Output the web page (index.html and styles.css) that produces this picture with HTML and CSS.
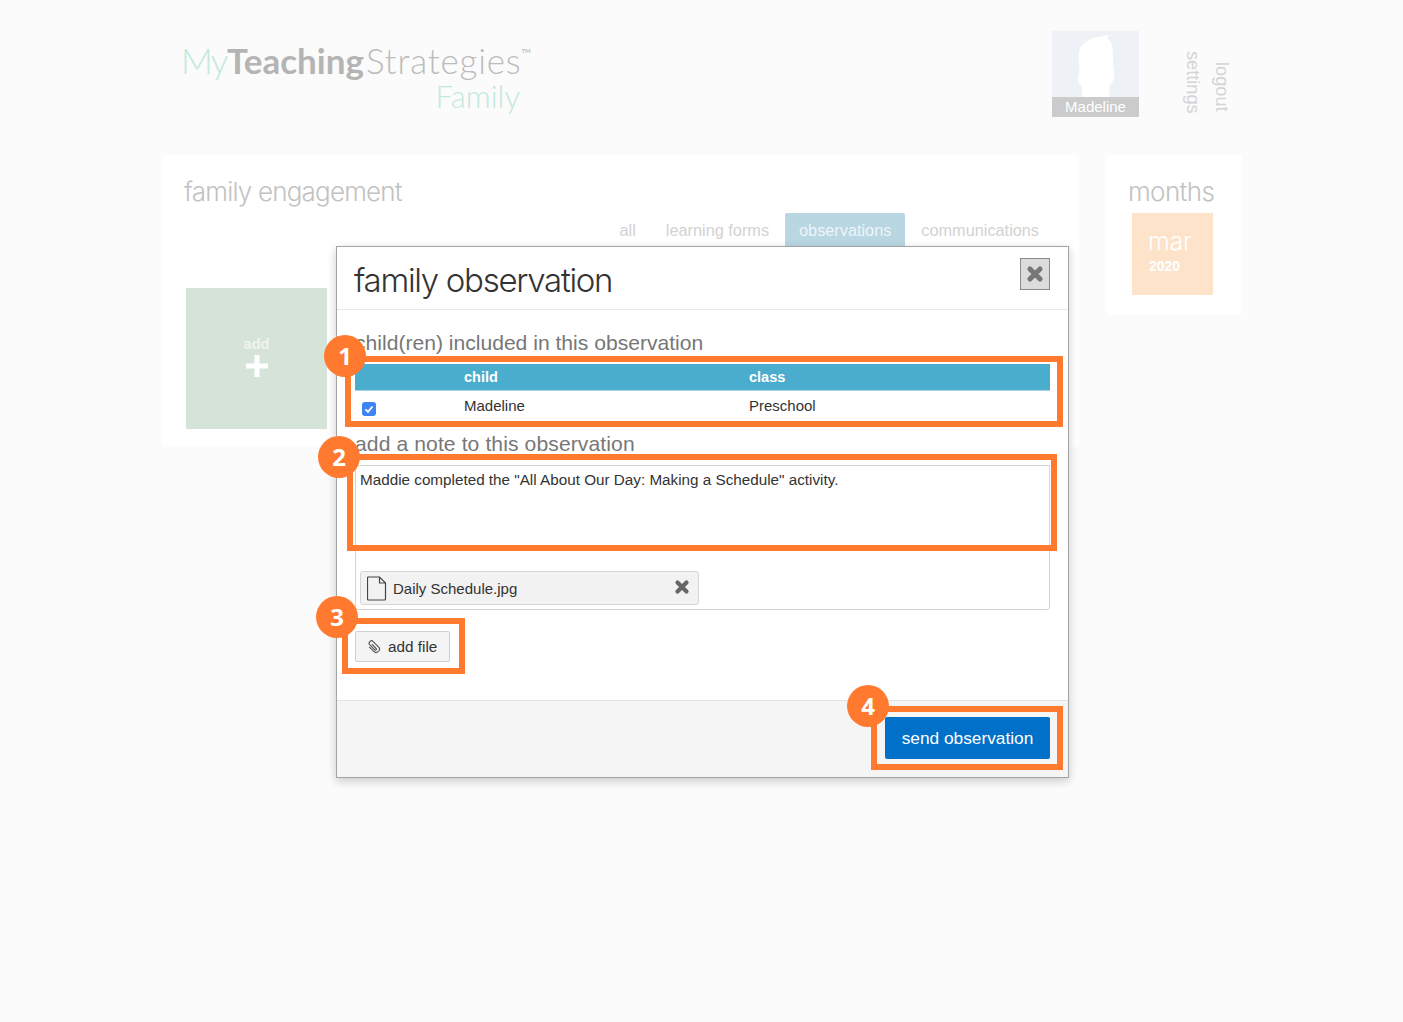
FILE: index.html
```html
<!DOCTYPE html>
<html lang="en">
<head>
    <meta charset="UTF-8">
    <meta name="viewport" content="width=device-width, initial-scale=1.0">
    <title>Family Observation</title>
    <link rel="stylesheet" href="styles.css">
</head>
<body>
    <div class="container">
        <div class="header">
            <div class="logo">
                <div class="logo-name"><span class="logo-my">My</span><b>Teaching</b><span class="logo-strategies">Strategies</span><sup>TM</sup></div>
                <div class="logo-family">Family</div>
            </div>
            <div class="user-area">
                <div class="avatar">
                    <svg class="avatar-shape" viewBox="0 0 87 66"><path d="M30 66 L30 56 C27 52 24 48 27 43 C28 35 26 28 27 20 C30 10 40 6 58 4 C55 6 55 7 56 8 C61 11 61 18 61 28 C61 35 62 39 62 43 C63 48 60 52 57 56 L58 66 Z"/></svg>
                    <div class="avatar-name">Madeline</div>
                </div>
                <a class="side-link side-settings">settings</a>
                <a class="side-link side-logout">logout</a>
            </div>
        </div>

        <div class="columns">
            <div class="card main-card">
                <h2 class="card-title">family engagement</h2>
                <div class="tabs">
                    <span class="tab">all</span>
                    <span class="tab">learning forms</span>
                    <span class="tab active">observations</span>
                    <span class="tab">communications</span>
                </div>
                <div class="add-tile">
                    <span>add</span>
                    <svg viewBox="0 0 22 22"><path d="M8.500 0h5v8.500h8.500v5h-8.500v8.500h-5v-8.500h-8.500v-5h8.500z"/></svg>
                </div>
            </div>
            <div class="card months-card">
                <h2 class="card-title">months</h2>
                <div class="month-tile">
                    <div class="month-name">mar</div>
                    <div class="month-year">2020</div>
                </div>
            </div>
        </div>
    </div>

    <div class="modal">
        <div class="modal-head">
            <h1>family observation</h1>
            <button class="close-btn"><svg viewBox="0 0 16 16"><path d="M3.500 3.500l9 9M12.500 3.500l-9 9"/></svg></button>
        </div>
        <div class="modal-body">
            <h3 class="label">child(ren) included in this observation</h3>
            <table class="child-table">
                <thead>
                    <tr><th class="col-check"></th><th class="col-child">child</th><th>class</th></tr>
                </thead>
                <tbody>
                    <tr>
                        <td><span class="check"><svg viewBox="0 0 14 14"><path d="M3.500 7.300l2.500 2.500 4.500-5.300"/></svg></span></td>
                        <td>Madeline</td>
                        <td>Preschool</td>
                    </tr>
                </tbody>
            </table>
            <h3 class="label label-note">add a note to this observation</h3>
            <div class="note-box">
                <div class="note-text">Maddie completed the "All About Our Day: Making a Schedule" activity.</div>
                <div class="file-chip">
                    <svg class="file-icon" viewBox="0 0 20 25"><path d="M1.500 1h11l6 6v16a1 1 0 0 1-1 1h-16a1 1 0 0 1-1-1v-21a1 1 0 0 1 1-1zM12.500 1v6h6"/></svg>
                    <span class="file-name">Daily Schedule.jpg</span>
                    <svg class="file-remove" viewBox="0 0 16 16"><path d="M3.500 3.500l9 9M12.500 3.500l-9 9"/></svg>
                </div>
            </div>
            <button class="add-file">
                <svg viewBox="0 0 16 16"><path d="M4.500 5v7a3.500 3.500 0 0 0 7 0v-8a2.500 2.500 0 0 0-5 0v7.500a1 1 0 0 0 2 0v-6.500"/></svg>
                add file
            </button>
        </div>
        <div class="modal-foot">
            <button class="send-btn">send observation</button>
        </div>
    </div>

    <!-- help callouts drawn over the dialog -->
    <div class="callout-box box-1"></div>
    <div class="callout-box box-2"></div>
    <div class="callout-box box-3"></div>
    <div class="callout-box box-4"></div>
    <div class="badge badge-1">1</div>
    <div class="badge badge-2">2</div>
    <div class="badge badge-3">3</div>
    <div class="badge badge-4">4</div>
</body>
</html>
```

FILE: styles.css
```css
* {
    box-sizing: border-box;
}
body {
    font-family: "Liberation Sans", Arial, sans-serif;
    margin: 0;
    height: 1022px;
    overflow: hidden;
    position: relative;
    background-color: #fbfbfb;
}
.container {
    width: 1080px;
    margin: 0 0 0 162px;
}
.header {
    height: 155px;
    display: flex;
    justify-content: space-between;
    padding: 31px 10px 0 19px;
}
.logo {
    width: 347px;
    padding-top: 10px;
    font-family: Lato, sans-serif;
    font-weight: 300;
    color: #bcbcbc;
}
.logo-name {
    font-size: 35px;
    line-height: 38px;
    white-space: nowrap;
}
.logo-name b {
    font-weight: 700;
    color: #b4b4b4;
    margin-right: 2px;
}
.logo-strategies {
    letter-spacing: 0.8px;
}
.logo-my {
    letter-spacing: -1.500px;
}
.logo-my,
.logo-family {
    color: #c2e9da;
}
.logo-name sup {
    font-size: 6px;
    font-weight: 700;
    vertical-align: 21px;
    line-height: 0;
}
.logo-family {
    font-size: 31px;
    line-height: 34px;
    text-align: right;
    padding-right: 8px;
}
.user-area {
    display: flex;
    align-items: flex-start;
}
.avatar {
    width: 87px;
    height: 86px;
    background-color: #eef1f6;
    position: relative;
    overflow: hidden;
}
.avatar-shape {
    display: block;
    width: 87px;
    height: 66px;
    fill: #fff;
}
.avatar-name {
    height: 20px;
    background-color: #cbcbcb;
    color: #fff;
    font-size: 15px;
    line-height: 20px;
    text-align: center;
}
.side-link {
    writing-mode: vertical-rl;
    color: #d4d4d4;
    font-size: 18.200px;
    line-height: 20px;
}
.side-settings {
    margin: 20px 0 0 44px;
}
.side-logout {
    margin: 31px 0 0 9px;
}
.columns {
    display: flex;
    align-items: flex-start;
    gap: 27px;
}
.card {
    background-color: #fff;
    border-radius: 4px;
}
.main-card {
    width: 917px;
    height: 292px;
    padding: 20px 26px 0 24px;
    position: relative;
}
.months-card {
    width: 136px;
    height: 160px;
    padding: 20px 26px 0;
}
.card-title {
    margin: 0;
    font-family: Inter, sans-serif;
    font-weight: 300;
    font-size: 26px;
    line-height: 34px;
    letter-spacing: -0.8px;
    color: #c2c2c2;
    white-space: nowrap;
}
.main-card .card-title {
    margin-left: -2px;
}
.months-card .card-title {
    margin-left: -4px;
    letter-spacing: -0.6px;
}
.tabs {
    display: flex;
    justify-content: flex-end;
    gap: 2px;
    height: 34px;
    margin-top: 4px;
    font-size: 16.300px;
    line-height: 35px;
    color: #d2d2d2;
}
.tab {
    padding: 0 14px;
    white-space: nowrap;
}
.tab.active {
    background-color: #b9d6e3;
    color: #eef5f8;
    border-radius: 2px 2px 0 0;
}
.add-tile {
    width: 141px;
    height: 141px;
    margin-top: 41px;
    background-color: #d6e3d9;
    color: #eef3ef;
    font-size: 14.500px;
    font-weight: bold;
    display: flex;
    flex-direction: column;
    align-items: center;
    padding-top: 48px;
}
.add-tile svg {
    width: 22px;
    height: 22px;
    fill: #fff;
    margin: 3px 0 0;
}
.month-tile {
    width: 81px;
    height: 82px;
    margin-top: 4px;
    background-color: #fde3c9;
    color: #fff;
    padding: 12px 0 0 16px;
}
.month-name {
    font-family: Inter, sans-serif;
    font-weight: 300;
    font-size: 25px;
    line-height: 32px;
    letter-spacing: -0.3px;
}
.month-year {
    font-size: 14px;
    font-weight: bold;
    line-height: 16px;
    margin: 1px 0 0 1px;
}
.modal {
    position: absolute;
    left: 336px;
    top: 246px;
    width: 733px;
    height: 532px;
    background-color: #fff;
    border: 1px solid #a5a5a5;
    box-shadow: 0 3px 9px rgba(0,0,0,0.2);
    display: flex;
    flex-direction: column;
}
.modal-head {
    height: 63px;
    flex: none;
    padding: 0 18px 0 17px;
    border-bottom: 1px solid #e9e9e9;
    display: flex;
    justify-content: space-between;
    align-items: flex-start;
}
.modal-head h1 {
    margin: 13px 0 0;
    font-family: Inter, sans-serif;
    font-weight: 300;
    font-size: 33px;
    line-height: 40px;
    letter-spacing: -1.300px;
    color: #333;
    white-space: nowrap;
}
.close-btn {
    width: 30px;
    height: 32px;
    margin-top: 11px;
    padding: 0;
    background-color: #dcdcdc;
    border: 1px solid #8a8a8a;
    display: flex;
    align-items: center;
    justify-content: center;
}
.close-btn svg {
    width: 18px;
    height: 18px;
    fill: none;
    stroke: #777;
    stroke-width: 4.500;
    stroke-linecap: round;
}
.modal-body {
    flex: 1;
    padding: 20px 18px 0;
}
.label {
    margin: 0;
    font-size: 21.100px;
    font-weight: normal;
    line-height: 26px;
    color: #777;
    white-space: nowrap;
}
.child-table {
    width: 695px;
    margin-top: 8px;
    border-collapse: collapse;
    table-layout: fixed;
    font-size: 15px;
    color: #333;
}
.child-table th {
    height: 26px;
    padding: 0;
    font-size: 14.500px;
    text-align: left;
    color: #fff;
    background-color: #4badcd;
    border-bottom: 1px solid #a8d4e4;
}
.child-table td {
    height: 31px;
    padding: 0;
}
.col-check {
    width: 109px;
}
.col-child {
    width: 285px;
}
.check {
    display: block;
    width: 14px;
    height: 14px;
    margin: 6px 0 0 7px;
    background-color: #3d84f5;
    border-radius: 3px;
}
.check svg {
    display: block;
    fill: none;
    stroke: #fff;
    stroke-width: 1.800;
}
.label-note {
    margin-top: 10px;
    letter-spacing: 0.1px;
}
.note-box {
    width: 695px;
    height: 145px;
    margin-top: 8px;
    border: 1px solid #d5d5d5;
    border-radius: 0 0 3px 3px;
    padding: 5px 0 0 4px;
}
.note-text {
    height: 100px;
    font-size: 15.250px;
    line-height: 18px;
    color: #333;
}
.file-chip {
    width: 339px;
    height: 34px;
    background-color: #f2f2f2;
    border: 1px solid #d5d5d5;
    border-radius: 3px;
    display: flex;
    align-items: center;
    padding: 0 8px 0 6px;
    font-size: 15px;
    color: #333;
}
.file-icon {
    width: 20px;
    height: 25px;
    fill: none;
    stroke: #444;
    stroke-width: 1.200;
}
.file-name {
    flex: 1;
    margin-left: 6px;
}
.file-remove {
    width: 16px;
    height: 16px;
    margin-top: -2px;
    fill: none;
    stroke: #666;
    stroke-width: 4.200;
    stroke-linecap: round;
}
.add-file {
    width: 95px;
    height: 31px;
    margin-top: 21px;
    padding: 0 0 0 10px;
    background-color: #f4f4f4;
    border: 1px solid #cfcfcf;
    border-radius: 2px;
    display: flex;
    align-items: center;
    gap: 7px;
    font-family: inherit;
    font-size: 15.300px;
    color: #333;
    white-space: nowrap;
}
.add-file svg {
    width: 15px;
    height: 15px;
    fill: none;
    stroke: #555;
    stroke-width: 1.200;
    transform: rotate(-45deg);
}
.modal-foot {
    height: 77px;
    flex: none;
    background-color: #f5f5f5;
    border-top: 1px solid #e3e3e3;
    display: flex;
    justify-content: flex-end;
    padding: 16px 18px 0 0;
}
.send-btn {
    width: 165px;
    height: 42px;
    padding: 0;
    background-color: #0070c9;
    color: #fff;
    border: none;
    border-radius: 2px;
    font-family: inherit;
    font-size: 17.300px;
}
.callout-box {
    position: absolute;
    border: 6px solid #ff7a2f;
}
.box-1 {
    left: 345px;
    top: 356px;
    width: 718px;
    height: 71px;
}
.box-2 {
    left: 347px;
    top: 454px;
    width: 710px;
    height: 97px;
}
.box-3 {
    left: 342px;
    top: 618px;
    width: 123px;
    height: 56px;
}
.box-4 {
    left: 871px;
    top: 706px;
    width: 192px;
    height: 64px;
}
.badge {
    position: absolute;
    width: 42px;
    height: 42px;
    border-radius: 50%;
    background-color: #ff7a2f;
    color: #fff;
    font-family: "Noto Sans", sans-serif;
    font-size: 24px;
    font-weight: 700;
    line-height: 42px;
    text-align: center;
}
.badge-1 {
    left: 324px;
    top: 335px;
}
.badge-2 {
    left: 318px;
    top: 436px;
}
.badge-3 {
    left: 316px;
    top: 596px;
}
.badge-4 {
    left: 847px;
    top: 685px;
}
```
